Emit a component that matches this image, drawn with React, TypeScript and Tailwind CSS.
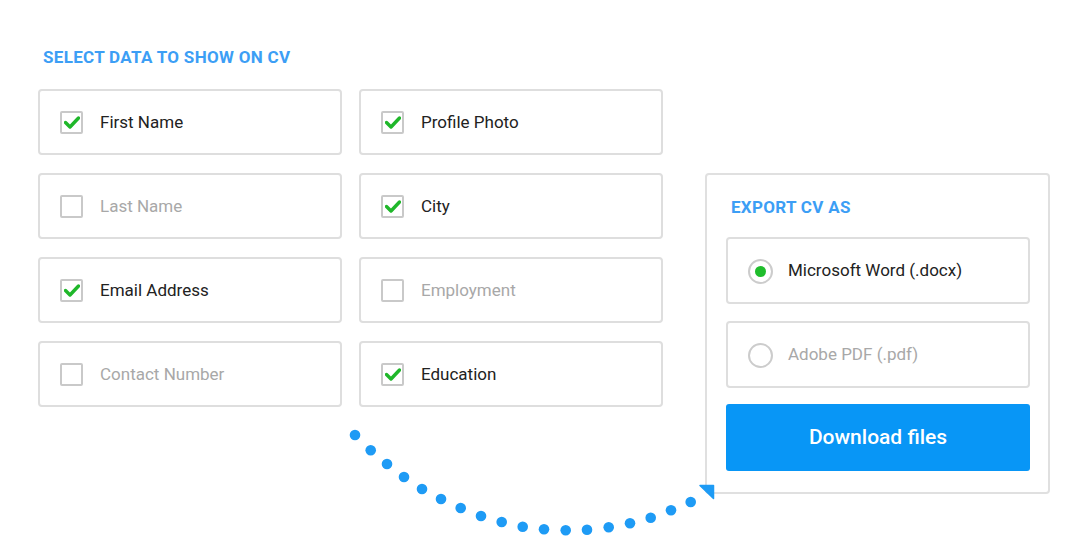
import React from "react";

const items: { label: string; checked: boolean }[] = [
  { label: "First Name", checked: true },
  { label: "Profile Photo", checked: true },
  { label: "Last Name", checked: false },
  { label: "City", checked: true },
  { label: "Email Address", checked: true },
  { label: "Employment", checked: false },
  { label: "Contact Number", checked: false },
  { label: "Education", checked: true },
];

const dots: [number, number][] = [
  [355, 435], [370.7, 450.3], [387, 464], [404, 477], [422, 489], [441, 499],
  [460.7, 508], [481, 516], [501.7, 522], [522.7, 526.7], [544, 529.3],
  [565.7, 530.3], [587, 529.7], [608.7, 527.3], [630, 523.3], [650.7, 517.7],
  [671, 510.3], [690.7, 502],
];

function Check() {
  return (
    <svg width="16" height="13" viewBox="0 0 16 13">
      <path d="M1.5 6.5 L6 11 L14.5 2" fill="none" stroke="#1fb72a" strokeWidth="3.4" strokeLinecap="round" strokeLinejoin="round" />
    </svg>
  );
}

export default function App() {
  return (
    <div
      className="relative w-[1080px] h-[560px] bg-white overflow-hidden"
      style={{ fontFamily: "Roboto, 'Liberation Sans', sans-serif" }}
    >
      <div className="flex pl-[38px] pt-[46px]">
        <div className="flex flex-col">
          <div className="pl-[5px] text-[17px] font-bold tracking-[0.3px] text-[#3c9ef5] leading-[22px]">
            SELECT DATA TO SHOW ON CV
          </div>
          <div className="mt-[21px] grid grid-cols-[304px_304px] auto-rows-[66px] gap-x-[17px] gap-y-[18px]">
            {items.map((it) => (
              <div
                key={it.label}
                className="flex items-center border-2 border-[#dedede] rounded-[4px] pl-[20px] pt-[1px]"
              >
                <div className="w-[23px] h-[23px] border-2 border-[#c9c9c9] rounded-[2px] flex items-center justify-center">
                  {it.checked && <Check />}
                </div>
                <span
                  className={
                    "ml-[17px] text-[17px] " +
                    (it.checked ? "text-[#222222]" : "text-[#a8a8a8]")
                  }
                >
                  {it.label}
                </span>
              </div>
            ))}
          </div>
        </div>
        <div className="ml-[42px] mt-[127px] w-[345px] h-[321px] border-2 border-[#e0e0e0] rounded-[4px] pl-[19px] pr-[18px] flex flex-col">
          <div className="pl-[5px] mt-[21px] text-[17px] font-bold tracking-[0.3px] text-[#3c9ef5] leading-[22px]">
            EXPORT CV AS
          </div>
          <div className="mt-[19px] h-[67px] border-2 border-[#dedede] rounded-[4px] flex items-center pl-[20px] pt-[1px]">
            <div className="w-[25px] h-[25px] rounded-full border-2 border-[#cccccc] flex items-center justify-center">
              <div className="w-[11px] h-[11px] rounded-full bg-[#1fbd2c]" />
            </div>
            <span className="ml-[15px] text-[17px] text-[#222222]">Microsoft Word (.docx)</span>
          </div>
          <div className="mt-[17px] h-[67px] border-2 border-[#dedede] rounded-[4px] flex items-center pl-[20px] pt-[1px]">
            <div className="w-[25px] h-[25px] rounded-full border-2 border-[#cccccc]" />
            <span className="ml-[15px] text-[17px] text-[#a8a8a8]">Adobe PDF (.pdf)</span>
          </div>
          <button className="mt-[16px] h-[67px] rounded-[3px] bg-[#0896f6] text-white text-[21px] font-medium">
            Download files
          </button>
        </div>
      </div>
      <svg className="absolute left-0 top-0 pointer-events-none" width="1080" height="560">
        {dots.map(([x, y], i) => (
          <circle key={i} cx={x} cy={y} r="5.3" fill="#1e9bf5" />
        ))}
        <path d="M700 485.5 L713.5 485.5 L713.5 498.5 Z" fill="#1e9bf5" stroke="#1e9bf5" strokeWidth="1.5" strokeLinejoin="round" />
      </svg>
    </div>
  );
}
